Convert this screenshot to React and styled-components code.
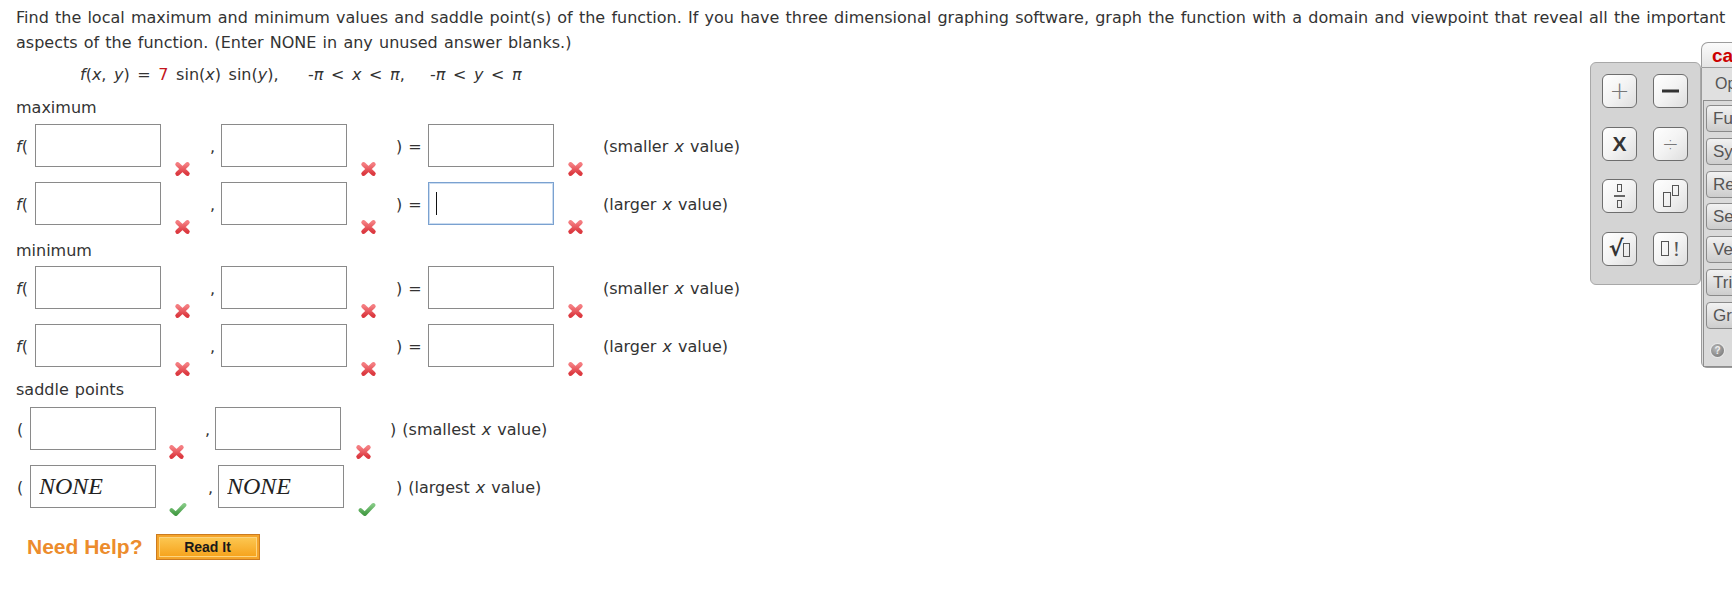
import React from 'react';
import styled, { createGlobalStyle } from 'styled-components';

const GlobalStyle = createGlobalStyle`
  html, body {
    margin: 0;
    padding: 0;
    background: #fff;
  }
  body {
    font-family: "DejaVu Sans", Verdana, sans-serif;
    font-size: 16px;
    word-spacing: 1px;
    color: #333;
    overflow: hidden;
  }
`;

const Page = styled.div`
  position: relative;
  width: 1732px;
  height: 591px;
  padding: 5px 0 0 16px;
  box-sizing: border-box;
  overflow: hidden;
`;

const Prompt = styled.p`
  margin: 0;
  line-height: 25px;
  white-space: nowrap;
  word-spacing: 1.1px;
`;

const Formula = styled.div`
  display: flex;
  margin: 10px 0 0 64px;
  line-height: 20px;
  white-space: pre;
  word-spacing: 2.5px;
`;

const Term = styled.span`
  flex: none;
  width: ${p => (p.$w ? `${p.$w}px` : 'auto')};
`;

const V = styled.i`
  font-style: italic;
`;

const Coef = styled.span`
  color: #c4161c;
`;

const SectionLabel = styled.div`
  margin-top: ${p => p.$mt}px;
  line-height: 20px;
`;

const Row = styled.div`
  display: flex;
  height: 43px;
  margin-top: ${p => p.$mt}px;
`;

const Text = styled.span`
  flex: none;
  box-sizing: border-box;
  width: ${p => (p.$w ? `${p.$w}px` : 'auto')};
  padding-left: ${p => p.$pl || 0}px;
  margin-left: ${p => p.$ml || 0}px;
  margin-top: 13px;
  line-height: 20px;
  white-space: pre;
`;

const Box = styled.input`
  flex: none;
  width: 126px;
  height: 43px;
  box-sizing: border-box;
  margin: 0;
  padding: 0 8px;
  border: 1px solid ${p => (p.$focus ? '#7aa1d0' : '#8a8a8a')};
  box-shadow: ${p => (p.$focus ? 'inset 0 0 0 1px rgba(160, 192, 228, 0.55)' : 'none')};
  border-radius: 0;
  background: #fff;
  outline: none;
  font: italic 24px "Liberation Serif", "Times New Roman", serif;
  word-spacing: 0;
  color: #222;
`;

const Field = styled.span`
  position: relative;
  flex: none;
  display: block;
`;

const Caret = styled.span`
  position: absolute;
  left: 8px;
  top: 10px;
  width: 1px;
  height: 23px;
  background: #111;
`;

const Mark = styled.span`
  flex: none;
  display: block;
  line-height: 0;
  margin-left: ${p => p.$ml}px;
  margin-top: 37px;
`;

const HelpRow = styled.div`
  display: flex;
  align-items: center;
  margin: 26px 0 0 11px;
  height: 26px;
`;

const NeedHelp = styled.span`
  font: bold 21px/26px "Liberation Sans", Arial, sans-serif;
  word-spacing: 0;
  color: #ec8c2c;
`;

const ReadIt = styled.button`
  margin-left: 13px;
  width: 104px;
  height: 26px;
  padding: 2px;
  box-sizing: border-box;
  border: 1px solid #cc7b20;
  background: #f4a42a;
  cursor: pointer;
  span {
    display: flex;
    align-items: center;
    justify-content: center;
    height: 100%;
    box-sizing: border-box;
    border: 1px solid #fdd47e;
    background: linear-gradient(#fcc650, #f6a41e);
    font: bold 14px "Liberation Sans", Arial, sans-serif;
    word-spacing: 0;
    color: #1a1a1a;
  }
`;

/* calcPad palette floating on the right */
const Calc = styled.div`
  position: absolute;
  left: 1590px;
  top: 42px;
  display: flex;
  align-items: flex-start;
  word-spacing: 0;
`;

const Pad = styled.div`
  margin-top: 20px;
  width: 111px;
  height: 223px;
  box-sizing: border-box;
  padding: 11px 0 0 11px;
  background: #d4d4d4;
  border: 1px solid #a8a8a8;
  border-radius: 6px;
  display: grid;
  grid-template-columns: 35px 35px;
  grid-auto-rows: 34px;
  column-gap: 16px;
  row-gap: 18.5px;
  align-content: start;
`;

const Key = styled.div`
  box-sizing: border-box;
  border: 1px solid #6e6e6e;
  border-radius: 6px;
  background: linear-gradient(135deg, #ffffff 0%, #f3f3f3 50%, #dedede 100%);
  display: flex;
  align-items: center;
  justify-content: center;
  color: ${p => p.$color || '#333'};
  font: ${p => p.$font || '20px "Liberation Sans", Arial, sans-serif'};
`;

const Slot = styled.span`
  display: block;
  box-sizing: border-box;
  width: ${p => p.$w}px;
  height: ${p => p.$h}px;
  border: 1.5px solid #555;
  margin-top: ${p => p.$mt || 0}px;
  margin-left: ${p => p.$ml || 0}px;
`;

const Stack = styled.span`
  display: flex;
  flex-direction: column;
  align-items: center;
  gap: 3px;
  i {
    display: block;
    width: 11px;
    height: 1.5px;
    background: #666;
  }
`;

const Inline = styled.span`
  display: flex;
  align-items: ${p => p.$align || 'center'};
`;

const Bang = styled.span`
  margin-left: 4px;
`;

const Side = styled.div`
  width: 150px;
  display: flex;
  flex-direction: column;
`;

const Tab = styled.div`
  height: 25px;
  box-sizing: border-box;
  padding-left: 10px;
  border: 1px solid #9c9c9c;
  border-bottom: none;
  border-radius: 7px 7px 0 0;
  background: linear-gradient(#fbfbfb, #e4e4e4);
  font: bold 19px/25px "Liberation Sans", Arial, sans-serif;
  color: #cc0000;
`;

const SideBody = styled.div`
  height: 301px;
  box-sizing: border-box;
  padding-top: 6px;
  border: 1px solid #9c9c9c;
  border-radius: 0 0 0 6px;
  background: #e0e0e0;
  display: flex;
  flex-direction: column;
`;

const SideTitle = styled.div`
  padding-left: 13px;
  font: 16px/20px "Liberation Sans", Arial, sans-serif;
  color: #555;
`;

const SideList = styled.div`
  flex: 1;
  margin: 6px 0 0 1px;
  padding: 4px 0 0 2px;
  border: 1px solid #8e8e8e;
  border-right: none;
  background: #dadada;
  display: flex;
  flex-direction: column;
  gap: 5.8px;
`;

const SideButton = styled.div`
  height: 27px;
  width: 130px;
  box-sizing: border-box;
  padding-left: 6px;
  border: 1px solid #8a8a8a;
  border-radius: 4px;
  background: linear-gradient(#f2f2f2, #cdcdcd);
  font: 17px/25px "Liberation Sans", Arial, sans-serif;
  color: #555;
`;

const HelpDot = styled.div`
  width: 13px;
  height: 13px;
  margin: 9px 0 0 5px;
  border-radius: 50%;
  background: radial-gradient(circle at 40% 35%, #b9b9b9, #6d6d6d);
  box-shadow: 0 0 0 1px #e9e9e9;
  color: #eee;
  font: bold 10px/13px "Liberation Sans", Arial, sans-serif;
  text-align: center;
`;

const Cross = () => (
  <svg width="17" height="16" viewBox="0 0 17 16">
    <defs>
      <linearGradient id="crossFill" x1="0" y1="0" x2="0" y2="1">
        <stop offset="0" stopColor="#f47c80" />
        <stop offset="1" stopColor="#dc3940" />
      </linearGradient>
    </defs>
    <path d="M3.6 3.4 L13.4 12.6 M13.4 3.4 L3.6 12.6" stroke="url(#crossFill)" strokeWidth="4.6" strokeLinecap="round" />
  </svg>
);

const Check = () => (
  <svg width="18" height="15" viewBox="0 0 18 15">
    <defs>
      <linearGradient id="checkFill" x1="0" y1="0" x2="0" y2="1">
        <stop offset="0" stopColor="#82c882" />
        <stop offset="1" stopColor="#459c45" />
      </linearGradient>
    </defs>
    <path d="M2.6 8.2 L6.8 12 L15.4 3" fill="none" stroke="url(#checkFill)" strokeWidth="4" strokeLinecap="round" strokeLinejoin="round" />
  </svg>
);

const Note = ({ children, ml }) => <Text $ml={ml}>{children}</Text>;

const ValueRow = ({ mt, note, focus }) => (
  <Row $mt={mt}>
    <Text $w={19}><V>f</V>(</Text>
    <Box readOnly />
    <Mark $ml={13}><Cross /></Mark>
    <Text $w={30} $pl={19}>,</Text>
    <Box readOnly />
    <Mark $ml={13}><Cross /></Mark>
    <Text $w={51} $pl={19}>) =</Text>
    {focus ? (
      <Field>
        <Box readOnly $focus />
        <Caret />
      </Field>
    ) : (
      <Box readOnly />
    )}
    <Mark $ml={13}><Cross /></Mark>
    <Note ml={19}>({note} <V>x</V> value)</Note>
  </Row>
);

const sideItems = ['Functions', 'Symbols', 'Relations', 'Sets', 'Vectors', 'Trig', 'Greek'];

const App = () => (
  <Page>
    <GlobalStyle />
    <Prompt>
      Find the local maximum and minimum values and saddle point(s) of the function. If you have three dimensional graphing software, graph the function with a domain and viewpoint that reveal all the important
      <br />
      aspects of the function. (Enter NONE in any unused answer blanks.)
    </Prompt>

    <Formula>
      <Term $w={228}>
        <V>f</V>(<V>x</V>, <V>y</V>) = <Coef>7</Coef> sin(<V>x</V>) sin(<V>y</V>),
      </Term>
      <Term $w={122}>
        -<V>π</V> &lt; <V>x</V> &lt; <V>π</V>,
      </Term>
      <Term>
        -<V>π</V> &lt; <V>y</V> &lt; <V>π</V>
      </Term>
    </Formula>

    <SectionLabel $mt={13}>maximum</SectionLabel>
    <ValueRow mt={6} note="smaller" />
    <ValueRow mt={15} note="larger" focus />

    <SectionLabel $mt={16}>minimum</SectionLabel>
    <ValueRow mt={5} note="smaller" />
    <ValueRow mt={15} note="larger" />

    <SectionLabel $mt={13}>saddle points</SectionLabel>
    <Row $mt={7}>
      <Text $w={14} $pl={1}>(</Text>
      <Box readOnly />
      <Mark $ml={12}><Cross /></Mark>
      <Text $w={30} $pl={20}>,</Text>
      <Box readOnly />
      <Mark $ml={14}><Cross /></Mark>
      <Note ml={18}>) (smallest <V>x</V> value)</Note>
    </Row>
    <Row $mt={15}>
      <Text $w={14} $pl={1}>(</Text>
      <Box readOnly value="NONE" />
      <Mark $ml={13}><Check /></Mark>
      <Text $w={31} $pl={21}>,</Text>
      <Box readOnly value="NONE" />
      <Mark $ml={14}><Check /></Mark>
      <Note ml={20}>) (largest <V>x</V> value)</Note>
    </Row>

    <HelpRow>
      <NeedHelp>Need Help?</NeedHelp>
      <ReadIt type="button"><span>Read It</span></ReadIt>
    </HelpRow>

    <Calc>
      <Pad>
        <Key $color="#777" $font='300 24px "DejaVu Sans", sans-serif'>+</Key>
        <Key>
          <svg width="17" height="4" viewBox="0 0 17 4"><rect width="17" height="3" y="0.5" fill="#333" /></svg>
        </Key>
        <Key $font='bold 21px "Liberation Sans", Arial, sans-serif'>X</Key>
        <Key $color="#777" $font='300 20px "DejaVu Sans", sans-serif'>÷</Key>
        <Key>
          <Stack>
            <Slot $w={5} $h={8} />
            <i />
            <Slot $w={5} $h={8} />
          </Stack>
        </Key>
        <Key>
          <Inline $align="flex-start">
            <Slot $w={8} $h={15} $mt={7} />
            <Slot $w={7} $h={11} $ml={1} />
          </Inline>
        </Key>
        <Key $font='bold 22px "DejaVu Sans", sans-serif'>
          <Inline>
            √<Slot $w={7} $h={14} $mt={2} />
          </Inline>
        </Key>
        <Key $color="#555" $font='22px "Liberation Serif", serif'>
          <Inline>
            <Slot $w={8} $h={15} />
            <Bang>!</Bang>
          </Inline>
        </Key>
      </Pad>
      <Side>
        <Tab>calcPad</Tab>
        <SideBody>
          <SideTitle>Operations</SideTitle>
          <SideList>
            {sideItems.map(item => (
              <SideButton key={item}>{item}</SideButton>
            ))}
            <HelpDot>?</HelpDot>
          </SideList>
        </SideBody>
      </Side>
    </Calc>
  </Page>
);

export default App;
